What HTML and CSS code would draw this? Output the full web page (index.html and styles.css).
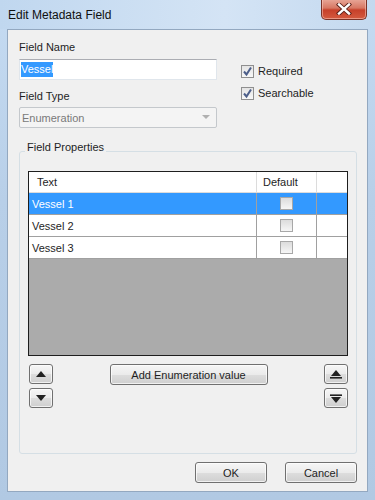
FILE: index.html
```html
<!DOCTYPE html>
<html lang="en">
<head>
  <meta charset="UTF-8" />
  <meta name="viewport" content="width=device-width, initial-scale=1.0" />
  <title>Edit Metadata Field</title>
  <link rel="stylesheet" href="styles.css">
</head>
<body>
  <div class="window">
    <div class="titlebar">
      <span class="title">Edit Metadata Field</span>
      <div class="close">
        <svg width="16" height="12" viewBox="0 0 16 12">
          <path d="M3 1.5 L13 10.5 M13 1.5 L3 10.5" stroke="#5a2018" stroke-width="4.2" stroke-linecap="square" />
          <path d="M3 1.5 L13 10.5 M13 1.5 L3 10.5" stroke="#fff" stroke-width="2.4" stroke-linecap="square" />
        </svg>
      </div>
    </div>

    <div class="client">
      <div class="top">
        <div class="fields">
          <div class="lbl">Field Name</div>
          <div class="input"><span class="selected-text">Vessel</span></div>
          <div class="lbl lbl-type">Field Type</div>
          <div class="select">
            <span>Enumeration</span>
            <svg width="8" height="5" viewBox="0 0 8 5"><path d="M0 0 H8 L4 4 Z" fill="#b0b0b0" /></svg>
          </div>
        </div>
        <div class="checks">
          <div class="check">
            <span class="box">
              <svg width="11" height="11" viewBox="0 0 11 11"><path d="M2 5.5 L4.5 8.5 L9 1.5" stroke="#4d5f8a" stroke-width="2" fill="none" /></svg>
            </span>
            Required
          </div>
          <div class="check">
            <span class="box">
              <svg width="11" height="11" viewBox="0 0 11 11"><path d="M2 5.5 L4.5 8.5 L9 1.5" stroke="#4d5f8a" stroke-width="2" fill="none" /></svg>
            </span>
            Searchable
          </div>
        </div>
      </div>

      <fieldset class="group">
        <legend>Field Properties</legend>
        <div class="grid">
          <div class="row head">
            <div class="c1">Text</div>
            <div class="c2">Default</div>
            <div class="c3"></div>
          </div>
          <div class="row active">
            <div class="c1">Vessel 1</div>
            <div class="c2"><span class="cell-box"></span></div>
            <div class="c3"></div>
          </div>
          <div class="row">
            <div class="c1">Vessel 2</div>
            <div class="c2"><span class="cell-box"></span></div>
            <div class="c3"></div>
          </div>
          <div class="row">
            <div class="c1">Vessel 3</div>
            <div class="c2"><span class="cell-box"></span></div>
            <div class="c3"></div>
          </div>
          <div class="empty"></div>
        </div>

        <div class="toolbar">
          <div class="arrows">
            <button class="btn small">
              <svg width="10" height="6" viewBox="0 0 10 6"><path d="M0 6 L5 0 L10 6 Z" fill="#222" /></svg>
            </button>
            <button class="btn small">
              <svg width="10" height="6" viewBox="0 0 10 6"><path d="M0 0 L5 6 L10 0 Z" fill="#222" /></svg>
            </button>
          </div>
          <button class="btn add">Add Enumeration value</button>
          <div class="arrows">
            <button class="btn small">
              <svg width="12" height="9" viewBox="0 0 12 9"><path d="M1 6 L6 0 L11 6 Z" fill="#222" /><rect x="0" y="7" width="12" height="1.6" fill="#222" /></svg>
            </button>
            <button class="btn small">
              <svg width="12" height="9" viewBox="0 0 12 9"><rect x="0" y="0.4" width="12" height="1.6" fill="#222" /><path d="M1 3 L6 9 L11 3 Z" fill="#222" /></svg>
            </button>
          </div>
        </div>
      </fieldset>

      <div class="actions">
        <button class="btn action">OK</button>
        <button class="btn action">Cancel</button>
      </div>
    </div>
  </div>
</body>
</html>
```

FILE: styles.css
```css
body {
  margin: 0;
  font-family: 'Liberation Sans', Arial, sans-serif;
  font-size: 11px;
  color: #1e1e1e;
}

.window {
  width: 375px;
  height: 500px;
  box-sizing: border-box;
  background: linear-gradient(to bottom, #c5dbf2, #b8cfe8 40%, #b1c9e3);
  display: flex;
  flex-direction: column;
}

.titlebar {
  height: 29px;
  display: flex;
  align-items: flex-start;
  background: linear-gradient(to right, #c0d7ef, #d4e4f5 60%, #c4d9ef);
}

.title {
  margin: 8px 0 0 8px;
  font-size: 12px;
  color: #101010;
}

.close {
  margin-left: auto;
  margin-right: 8px;
  margin-top: -1px;
  width: 44px;
  height: 20px;
  border: 1px solid #7a3328;
  border-top: none;
  border-radius: 0 0 5px 5px;
  background: linear-gradient(to bottom, #e9a99a, #d77763 45%, #c7402a 55%, #d45a3f);
  box-shadow: inset 0 0 0 1px rgba(255, 210, 200, 0.5);
  display: flex;
  align-items: center;
  justify-content: center;
}

.client {
  height: 463px;
  margin: 0 7px;
  box-sizing: border-box;
  border: 1px solid #93a8c0;
  background: #f0f0f0;
  padding: 9px 10px 0 11px;
}

.top {
  display: flex;
}

.fields {
  width: 198px;
}

.lbl {
  line-height: 16px;
}

.lbl-type {
  margin-top: 8px;
}

.input {
  margin-top: 4px;
  height: 21px;
  box-sizing: border-box;
  border: 1px solid #e0e6ec;
  border-top-color: #abadb3;
  background: #fff;
  padding: 2px 0 0 1px;
}

.selected-text {
  background: #3399ff;
  color: #fff;
  line-height: 15px;
  display: inline-block;
}

.select {
  margin-top: 3px;
  height: 21px;
  box-sizing: border-box;
  border: 1px solid #c4c8cc;
  border-radius: 2px;
  background: #f4f4f4;
  color: #7a7a7a;
  display: flex;
  align-items: center;
  justify-content: space-between;
  padding: 0 6px 0 2px;
}

.checks {
  margin-left: 24px;
  padding-top: 21px;
}

.check {
  height: 22px;
  display: flex;
  align-items: center;
  gap: 4px;
}

.box {
  width: 11px;
  height: 11px;
  border: 1px solid #8f8f8f;
  background: linear-gradient(to bottom, #e4e4e4, #f8f8f8);
  display: flex;
}

.group {
  margin: 11px 0 0;
  padding: 8px 8px 45px;
  border: 1px solid #d5dfe5;
  border-radius: 3px;
  min-width: 0;
}

.group legend {
  padding: 0 2px 8px;
  margin-left: -3px;
  line-height: 16px;
}

.grid {
  height: 185px;
  box-sizing: border-box;
  border: 1px solid #1e1e1e;
  display: flex;
  flex-direction: column;
}

.row {
  display: flex;
  height: 22px;
  box-sizing: border-box;
  border-bottom: 1px solid #a0a0a0;
  background: #fff;
}

.row.head {
  height: 21px;
  border-bottom-color: #dcdcdc;
}

.row.active {
  background: #3399ff;
  color: #fff;
}

.row > div {
  display: flex;
  align-items: center;
  box-sizing: border-box;
}

.c1 {
  width: 228px;
  padding-left: 3px;
  border-right: 1px solid #a0a0a0;
}

.c2 {
  width: 60px;
  justify-content: center;
  border-right: 1px solid #a0a0a0;
}

.c3 {
  flex: 1;
}

.head .c1 {
  padding-left: 8px;
  border-right-color: #dcdcdc;
}

.head .c2 {
  justify-content: flex-start;
  padding-left: 6px;
  border-right-color: #dcdcdc;
}

.cell-box {
  width: 11px;
  height: 11px;
  border: 1px solid #a8a8a8;
  background: linear-gradient(to bottom, #dcdcdc, #f6f6f6);
}

.empty {
  flex: 1;
  background: #ababab;
}

.toolbar {
  display: flex;
  justify-content: space-between;
  align-items: flex-start;
  margin-top: 8px;
  padding-left: 1px;
}

.arrows {
  display: flex;
  flex-direction: column;
  gap: 4px;
}

.btn {
  font-family: 'Liberation Sans', Arial, sans-serif;
  font-size: 11px;
  color: #1e1e1e;
  border: 1px solid #707070;
  border-radius: 3px;
  background: linear-gradient(to bottom, #f6f6f6, #ebebeb 50%, #dddddd 51%, #cfcfcf);
  box-shadow: inset 0 0 0 1px rgba(255, 255, 255, 0.7);
  padding: 0;
  display: flex;
  align-items: center;
  justify-content: center;
}

.small {
  width: 24px;
  height: 20px;
}

.add {
  width: 158px;
  height: 21px;
}

.actions {
  display: flex;
  justify-content: flex-end;
  gap: 18px;
  margin-top: 8px;
}

.action {
  width: 72px;
  height: 21px;
}
```
